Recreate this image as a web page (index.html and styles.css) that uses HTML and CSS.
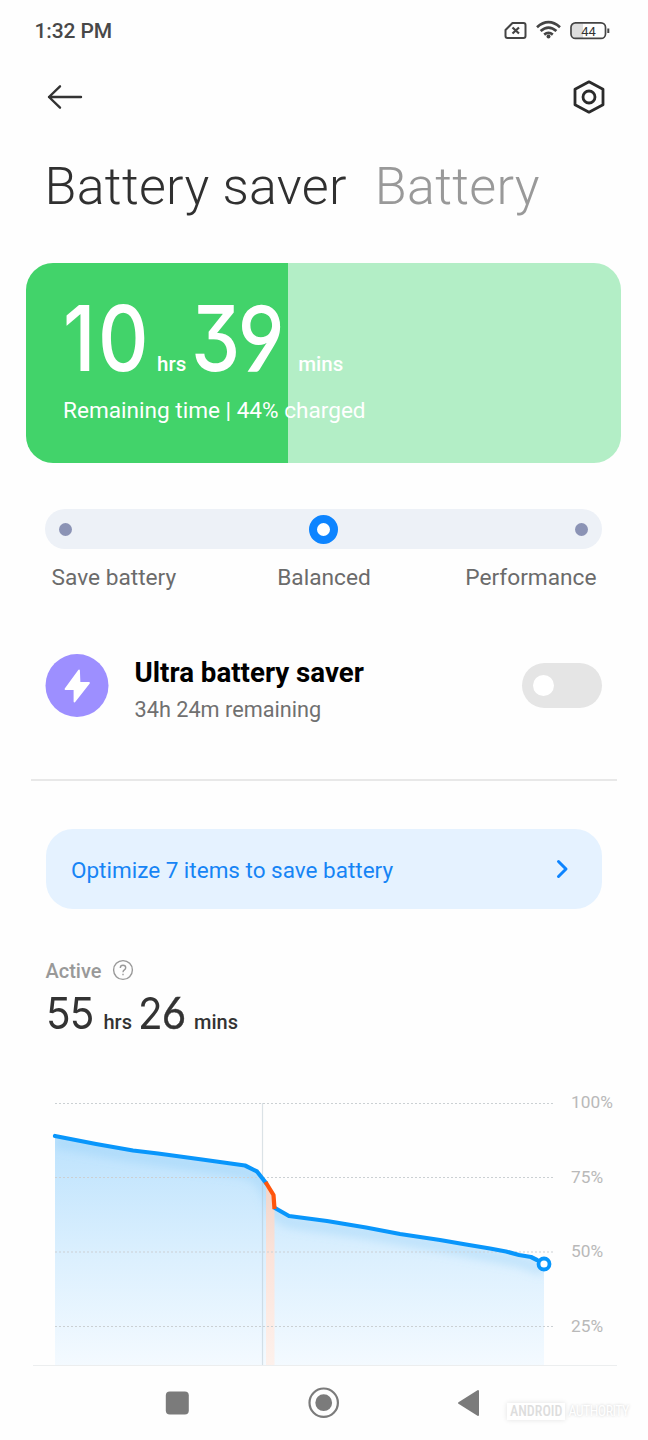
FILE: index.html
```html
<!DOCTYPE html>
<html lang="en">
<head>
<meta charset="utf-8">
<title>Battery saver</title>
<link rel="stylesheet" href="styles.css">
</head>
<body>
<div class="screen">
  <header class="status">
    <span class="clock">1:32 PM</span>
    <svg class="status-icons" width="107" height="24" viewBox="0 0 107 24" fill="none" stroke="#444">
      <path d="M8.500 4H19.500Q21.500 4 21.500 6V17Q21.500 19 19.500 19H3.500Q1.500 19 1.500 17V11Z" stroke-width="2" stroke-linejoin="round"/>
      <path d="M8.500 8.500l6.500 6M15 8.500l-6.500 6" stroke-width="2.200"/>
      <g stroke-width="2.700"><path d="M33 8.200Q44.500-1.800 56 8.200"/><path d="M36.600 12Q44.500 5.200 52.400 12"/><path d="M40.200 15.600Q44.500 12.200 48.800 15.600"/></g>
      <circle cx="44.500" cy="17.600" r="2" fill="#444" stroke="none"/>
      <path d="M71 4.500h8v14.500h-8q-3 0-3-3v-8.500q0-3 3-3z" fill="#ddd" stroke="none"/>
      <rect x="67" y="3.800" width="34.500" height="15.600" rx="4.500" stroke-width="1.700"/>
      <path d="M104.300 9.500v4.500" stroke-width="2"/>
      <text x="84.500" y="16.700" class="level" text-anchor="middle">44</text>
    </svg>
  </header>

  <div class="toolbar">
    <svg width="36" height="26" viewBox="0 0 36 26" fill="none" stroke="#333" stroke-width="2.400" stroke-linecap="round" stroke-linejoin="round"><path d="M34 13H2M13 2.300L2 13l11 10.700"/></svg>
    <svg width="34" height="36" viewBox="0 0 34 36" fill="none" stroke="#2b2b2b" stroke-width="2.800" stroke-linejoin="round"><path d="M17 2.800L31 10.300V25.700L17 33.200L3 25.700V10.300Z"/><circle cx="17" cy="18" r="6"/></svg>
  </div>

  <nav class="tabs"><span class="tab active">Battery saver</span><span class="tab">Battery</span></nav>

  <section class="charge">
    <div class="remaining"><span class="num ten">10</span><span class="unit">hrs</span><span class="num thirty">3<span class="geo">9</span></span><span class="unit mins">mins</span></div>
    <div class="caption">Remaining time | 44% charged</div>
  </section>

  <div class="slider"><i class="stop"></i><i class="knob"></i><i class="stop"></i></div>
  <div class="modes"><span>Save battery</span><span>Balanced</span><span>Performance</span></div>

  <section class="ultra">
    <svg width="64" height="64" viewBox="0 0 64 64"><circle cx="32" cy="31.500" r="31.500" fill="#9d8fff"/><path d="M34 16.500L20.500 35H29.500V47.500L44 29H34.500Z" fill="#fff" stroke="#fff" stroke-width="1.800" stroke-linejoin="round"/></svg>
    <div class="ultra-text"><div class="ultra-title">Ultra battery saver</div><div class="ultra-sub">34h 24m remaining</div></div>
    <div class="toggle"><i></i></div>
  </section>

  <div class="divider"></div>

  <div class="optimize"><span>Optimize 7 items to save battery</span>
    <svg width="14" height="22" viewBox="0 0 14 22" fill="none" stroke="#0d84ff" stroke-width="3" stroke-linecap="round" stroke-linejoin="round"><path d="M3.500 3.500L11 11L3.500 18.500"/></svg>
  </div>

  <div class="active-head"><span>Active</span>
    <svg width="22" height="22" viewBox="0 0 22 22" fill="none" stroke="#999" stroke-width="1.400"><circle cx="11" cy="11" r="9.400"/><path d="M8.300 9Q8.300 6.300 11 6.300T13.700 8.800Q13.700 10 12.400 10.900Q11 11.900 11 13.200"/><path d="M11 14.700v1.600"/></svg>
  </div>
  <div class="active-time"><span class="num fifty">55</span><span class="unit">hrs</span><span class="num twenty">2<span class="geo">6</span></span><span class="unit mins">mins</span></div>

  <svg class="chart" width="648" height="286" viewBox="0 1080 648 286">
    <defs>
      <linearGradient id="area" gradientUnits="userSpaceOnUse" x1="0" y1="1136" x2="0" y2="1366"><stop offset="0" stop-color="#bce2fd"/><stop offset=".5" stop-color="#daeffe"/><stop offset="1" stop-color="#f4faff"/></linearGradient>
      <linearGradient id="drain" x1="0" y1="0" x2="0" y2="1"><stop offset="0" stop-color="#f0d5ca"/><stop offset=".4" stop-color="#fbe3da"/><stop offset="1" stop-color="#fdf1ec"/></linearGradient>
      <clipPath id="under"><path d="M55 1136L96 1144L133 1150.500L158 1153.500L202 1159.500L245 1165.500L257 1171.500L266 1183L273.500 1195L275 1208L289 1216L327 1221L366 1227.500L400 1234L440 1240L466 1244.500L490 1248.500L506 1251.500L519 1255L531 1257L537 1260L544 1264V1366H55Z"/></clipPath>
      <filter id="soft" x="-10%" y="-30%" width="120%" height="160%"><feGaussianBlur stdDeviation="5"/></filter>
    </defs>
    <g clip-path="url(#under)">
      <rect x="55" y="1100" width="489" height="266" fill="url(#area)"/>
      <path d="M55 1142L133 1156L245 1172L257 1178L266 1190L275 1214L289 1222L366 1233L440 1246L519 1261L544 1270" fill="none" stroke="#8dcbf5" stroke-opacity=".35" stroke-width="11" filter="url(#soft)"/>
      <rect x="266" y="1184" width="8.500" height="182" fill="url(#drain)"/>
    </g>
    <path d="M55 1103.500H553M55 1177.500H553M55 1252H553M55 1326.500H553" stroke="#cbd0d3" stroke-width="1.200" stroke-dasharray="2 2"/>
    <path d="M262.500 1103V1366" stroke="#a8b8c4" stroke-opacity=".4" stroke-width="1.200"/>
    <path d="M33 1365.500H617" stroke="#eceeef"/>
    <g fill="none" stroke-width="4.200" stroke-linejoin="round">
      <path d="M55 1136L96 1144L133 1150.500L158 1153.500L202 1159.500L245 1165.500L257 1171.500L266 1183" stroke="#0996fb" stroke-linecap="round"/>
      <path d="M275 1208L289 1216L327 1221L366 1227.500L400 1234L440 1240L466 1244.500L490 1248.500L506 1251.500L519 1255L531 1257L537 1260L544 1264" stroke="#0996fb" stroke-linecap="round"/>
      <path d="M265.500 1182L273.500 1195L274.500 1209" stroke="#ff550c"/>
    </g>
    <circle cx="544" cy="1264" r="5.500" fill="#fff" stroke="#0996fb" stroke-width="3.800"/>
    <g class="axis"><text x="571" y="1108">100%</text><text x="571" y="1182.500">75%</text><text x="571" y="1257">50%</text><text x="571" y="1331.500">25%</text></g>
  </svg>

  <footer class="nav">
    <svg width="24" height="24" viewBox="0 0 24 24"><rect x=".8" y=".5" width="23" height="23" rx="4" fill="#7b7b7b"/></svg>
    <svg width="32" height="32" viewBox="0 0 32 32"><circle cx="15.700" cy="15.700" r="14.200" fill="none" stroke="#7b7b7b" stroke-width="2.200"/><circle cx="15.700" cy="15.700" r="8.400" fill="#7b7b7b"/></svg>
    <svg width="24" height="28" viewBox="0 0 24 28"><path d="M2 14L21 2V26Z" fill="#7b7b7b" stroke="#7b7b7b" stroke-width="2" stroke-linejoin="round"/></svg>
    <div class="mark"><b>ANDROID</b><span>AUTHORITY</span></div>
  </footer>
</div>
</body>
</html>
```
FILE: styles.css
```css
body { margin: 0; background: #fefefe; font-family: Roboto, "Liberation Sans", sans-serif; }
.screen { width: 648px; height: 1440px; overflow: hidden; display: flex; flex-direction: column; }
svg { display: block; flex: none; }
.status { height: 62px; padding: 0 37px 0 34.500px; display: flex; align-items: center; justify-content: space-between; flex: none; }
.clock { font-size: 21px; font-weight: 500; letter-spacing: -.1px; color: #484848; line-height: 24px; }
.level { font: 400 13px Roboto, sans-serif; fill: #333; stroke: none; }
.toolbar { height: 70px; padding: 0 42px 0 47px; display: flex; align-items: center; justify-content: space-between; flex: none; }
.tabs { height: 131px; padding: 25px 0 0 44.500px; box-sizing: border-box; display: flex; gap: 28px; flex: none; }
.tab { font-size: 52px; line-height: 60px; font-weight: 300; letter-spacing: .3px; color: #999; white-space: nowrap; }
.tab.active { color: #303030; }
.charge { height: 200px; margin: 0 27px 0 26px; padding: 25px 0 0 37px; box-sizing: border-box; border-radius: 27px; background: linear-gradient(90deg, #42d36a 262px, #b3eec6 262px); color: #fff; flex: none; }
.remaining, .active-time { display: flex; align-items: baseline; white-space: nowrap; }
.remaining { height: 109px; line-height: 100px; }
.num { font-family: Inter, Roboto, sans-serif; font-feature-settings: "cv09"; transform-origin: left; }
.geo { font-family: Lato, Inter, sans-serif; line-height: 1; }
.remaining .num { font-size: 91px; font-weight: 450; transform: scaleX(.86); }
.remaining .geo { font-size: 92px; font-weight: 400; -webkit-text-stroke: 1.500px #fff; }
.ten { width: 94px; letter-spacing: 3px; }
.thirty { width: 104px; margin-left: 5px; letter-spacing: -2px; }
.remaining .unit { font-size: 20.500px; font-weight: 500; }
.remaining .mins { margin-left: 3px; }
.caption { font-size: 22.600px; line-height: 28px; }
.slider { height: 40px; margin: 46px 46px 0 45px; padding: 0 14px; box-sizing: border-box; display: flex; align-items: center; justify-content: space-between; border-radius: 20px; background: #edf1f7; flex: none; }
.stop { width: 13px; height: 13px; border-radius: 50%; background: #8b93b5; }
.knob { width: 13px; height: 13px; border: 8.500px solid #0d84ff; border-radius: 50%; background: #fff; }
.modes { height: 105px; margin: 0 51.500px; padding-top: 15px; box-sizing: border-box; display: grid; grid-template-columns: 1fr auto 1fr; font-size: 22.700px; line-height: 28px; color: #6b6b6b; flex: none; }
.modes span:last-child { text-align: right; }
.ultra { height: 64px; margin: 0 46px 0 45px; display: flex; align-items: center; flex: none; }
.ultra-text { flex: 1; margin: 8px 0 0 25.500px; }
.ultra-title { font-size: 27.700px; line-height: 34px; font-weight: 700; color: #000; }
.ultra-sub { margin-top: 6px; font-size: 21.700px; line-height: 28px; color: #707070; }
.toggle { width: 80px; height: 45px; margin-bottom: 1px; padding-left: 11px; box-sizing: border-box; display: flex; align-items: center; border-radius: 23px; background: #e5e5e5; }
.toggle i { width: 21px; height: 21px; border-radius: 50%; background: #fff; }
.divider { height: 1.500px; margin: 61px 31px 48.500px; background: #e8e8e8; flex: none; }
.optimize { height: 80px; margin: 0 46px 0 45.500px; padding: 0 33px 0 25.500px; box-sizing: border-box; display: flex; align-items: center; justify-content: space-between; border-radius: 27px; background: #e5f2ff; color: #1684f5; font-size: 22.500px; flex: none; }
.optimize span { padding-top: 2px; }
.active-head { height: 24px; margin: 49px 0 0 45.500px; display: flex; align-items: center; gap: 11px; font-size: 20px; font-weight: 500; color: #999; flex: none; }
.active-head span { padding-top: 1px; }
.active-time { height: 98px; padding-left: 45.500px; line-height: 62px; color: #333; flex: none; }
.active-time .num { font-size: 44px; font-weight: 400; letter-spacing: -.8px; transform: scaleX(.92); }
.active-time .geo { font-size: 44.500px; -webkit-text-stroke: .4px #333; }
.fifty { width: 58px; }
.twenty { width: 56px; margin-left: 6px; }
.active-time .mins { margin-left: 0; }
.active-time .unit { font-size: 20px; font-weight: 500; }
.axis { font: 17.300px Roboto, sans-serif; fill: #b9b9b9; }
.nav { height: 74px; padding-left: 165px; display: flex; align-items: center; flex: none; }
.nav svg:nth-child(2) { margin-left: 119px; }
.nav svg:nth-child(3) { margin-left: 117px; }
.mark { display: flex; align-items: center; margin: 16px 0 0 26px; font: 400 14px/17px "Roboto Condensed", Roboto, sans-serif; color: #fff; text-shadow: 0 0 3px #ccc; }
.mark b { padding: 0 3px; font-weight: 500; color: #ddd; background: #fff; box-shadow: 0 0 5px #e2e2e2; text-shadow: none; }
.mark span { padding-left: 3px; letter-spacing: -.6px; }
```
